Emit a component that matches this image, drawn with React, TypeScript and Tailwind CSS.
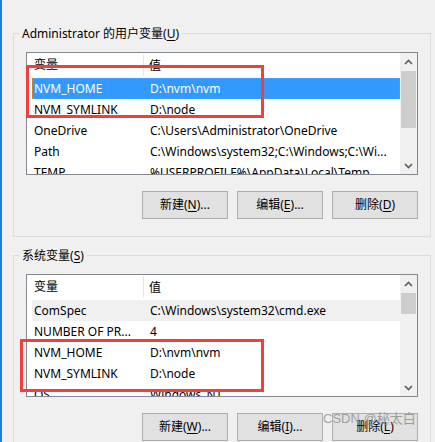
import React from "react";

type Row = [string, string];

const userVars: Row[] = [
  ["NVM_HOME", "D:\\nvm\\nvm"],
  ["NVM_SYMLINK", "D:\\node"],
  ["OneDrive", "C:\\Users\\Administrator\\OneDrive"],
  ["Path", "C:\\Windows\\system32;C:\\Windows;C:\\Wi..."],
  ["TEMP", "%USERPROFILE%\\AppData\\Local\\Temp"],
];

const systemVars: Row[] = [
  ["ComSpec", "C:\\Windows\\system32\\cmd.exe"],
  ["NUMBER OF PR...", "4"],
  ["NVM_HOME", "D:\\nvm\\nvm"],
  ["NVM_SYMLINK", "D:\\node"],
  ["OS", "Windows_NT"],
];

const Chevron = ({ dir }: { dir: "up" | "down" }) => (
  <svg width="9" height="6" viewBox="0 0 9 6">
    <polyline
      points={dir === "up" ? "1,5 4.5,1.5 8,5" : "1,1 4.5,4.5 8,1"}
      fill="none"
      stroke="#606060"
      strokeWidth="1.7"
    />
  </svg>
);

const ScrollBar = ({ thumb }: { thumb: string }) => (
  <div className="w-[17px] flex flex-col bg-[#f0f0f0]">
    <div className="h-[17px] flex items-center justify-center">
      <Chevron dir="up" />
    </div>
    <div className="flex-1 px-[1px]">
      <div className={`bg-[#cdcdcd] ${thumb}`}></div>
    </div>
    <div className="h-[17px] flex items-center justify-center">
      <Chevron dir="down" />
    </div>
  </div>
);

// 列表视图：表头 + 行 + 竖向滚动条，红框标出 NVM 相关的两行
const VarList = ({
  rows,
  selected,
  hovered,
  thumb,
  mark,
}: {
  rows: Row[];
  selected?: number;
  hovered?: number;
  thumb: string;
  mark: string;
}) => (
  <div className="relative h-[123px] border border-[#828790] bg-white">
    <div className="flex h-full overflow-hidden">
      <div className="flex-1 flex flex-col overflow-hidden">
        <div className="h-[25px] flex shrink-0 items-center">
          <div className="w-[117px] h-[22px] self-start mt-[1px] pl-[7px] flex items-center border-r border-[#e5e5e5]">
            变量
          </div>
          <div className="pl-[5px]">值</div>
        </div>
        {rows.map(([name, value], i) => (
          <div
            key={name}
            className={
              "h-[21px] shrink-0 ml-[5px] flex items-center whitespace-nowrap " +
              (i === selected
                ? "bg-[#3399ff] text-white outline outline-1 outline-dotted outline-[#c98a3a] -outline-offset-1"
                : i === hovered
                ? "bg-[#f0f0f0]"
                : "")
            }
          >
            <div className="w-[112px] pl-[2px] overflow-hidden">{name}</div>
            <div className="pl-[6px]">{value}</div>
          </div>
        ))}
      </div>
      <ScrollBar thumb={thumb} />
    </div>
    <div className={`absolute border-[3px] border-[#f43d3d] ${mark}`}></div>
  </div>
);

const Btn = ({ label, k, tail }: { label: string; k: string; tail?: string }) => (
  <button className="w-[86px] h-[28px] bg-[#e1e1e1] border border-[#adadad] flex items-center justify-center">
    {label}(<span className="underline underline-offset-2">{k}</span>){tail}
  </button>
);

const Group = ({
  title,
  k,
  children,
  className = "",
}: {
  title: string;
  k: string;
  children: React.ReactNode;
  className?: string;
}) => (
  <fieldset className={`border border-[#dcdcdc] pl-[12px] pr-[12px] pt-[10px] pb-[17px] ${className}`}>
    <legend className="-ml-[7px] px-[3px] h-[17px] leading-[17px]">
      {title}(<span className="underline underline-offset-2">{k}</span>)
    </legend>
    {children}
  </fieldset>
);

const App = () => {
  return (
    <div className="w-[435px] h-[442px] overflow-hidden bg-[#f0f0f0] border-l-2 border-[#1c7fd6] pl-[11px] pr-[4px] pt-[25px] text-[12px] text-black font-['Noto_Sans','Noto_Sans_CJK_SC',sans-serif]">
      <Group title="Administrator 的用户变量" k="U">
        <VarList
          rows={userVars}
          selected={0}
          thumb="mt-[1px] h-[57px]"
          mark="-left-[1px] top-[12px] w-[238px] h-[53px]"
        />
        <div className="mt-[16px] flex justify-end gap-[9px]">
          <Btn label="新建" k="N" tail="..." />
          <Btn label="编辑" k="E" tail="..." />
          <Btn label="删除" k="D" />
        </div>
      </Group>

      <Group title="系统变量" k="S" className="mt-[10px]">
        <VarList
          rows={systemVars}
          hovered={0}
          thumb="mt-[1px] h-[21px]"
          mark="-left-[7px] top-[64px] w-[244px] h-[53px]"
        />
        <div className="mt-[16px] flex justify-end gap-[9px] relative">
          <Btn label="新建" k="W" tail="..." />
          <Btn label="编辑" k="I" tail="..." />
          <Btn label="删除" k="L" />
          {/* 水印 */}
          <span className="absolute left-[297px] -top-[1px] leading-[14px] whitespace-nowrap text-[13px] text-[#8c8c8c]/80 font-['Liberation_Sans','Noto_Sans_CJK_SC',sans-serif] pointer-events-none">
            CSDN @秘太白
          </span>
        </div>
      </Group>
    </div>
  );
};

export default App;
